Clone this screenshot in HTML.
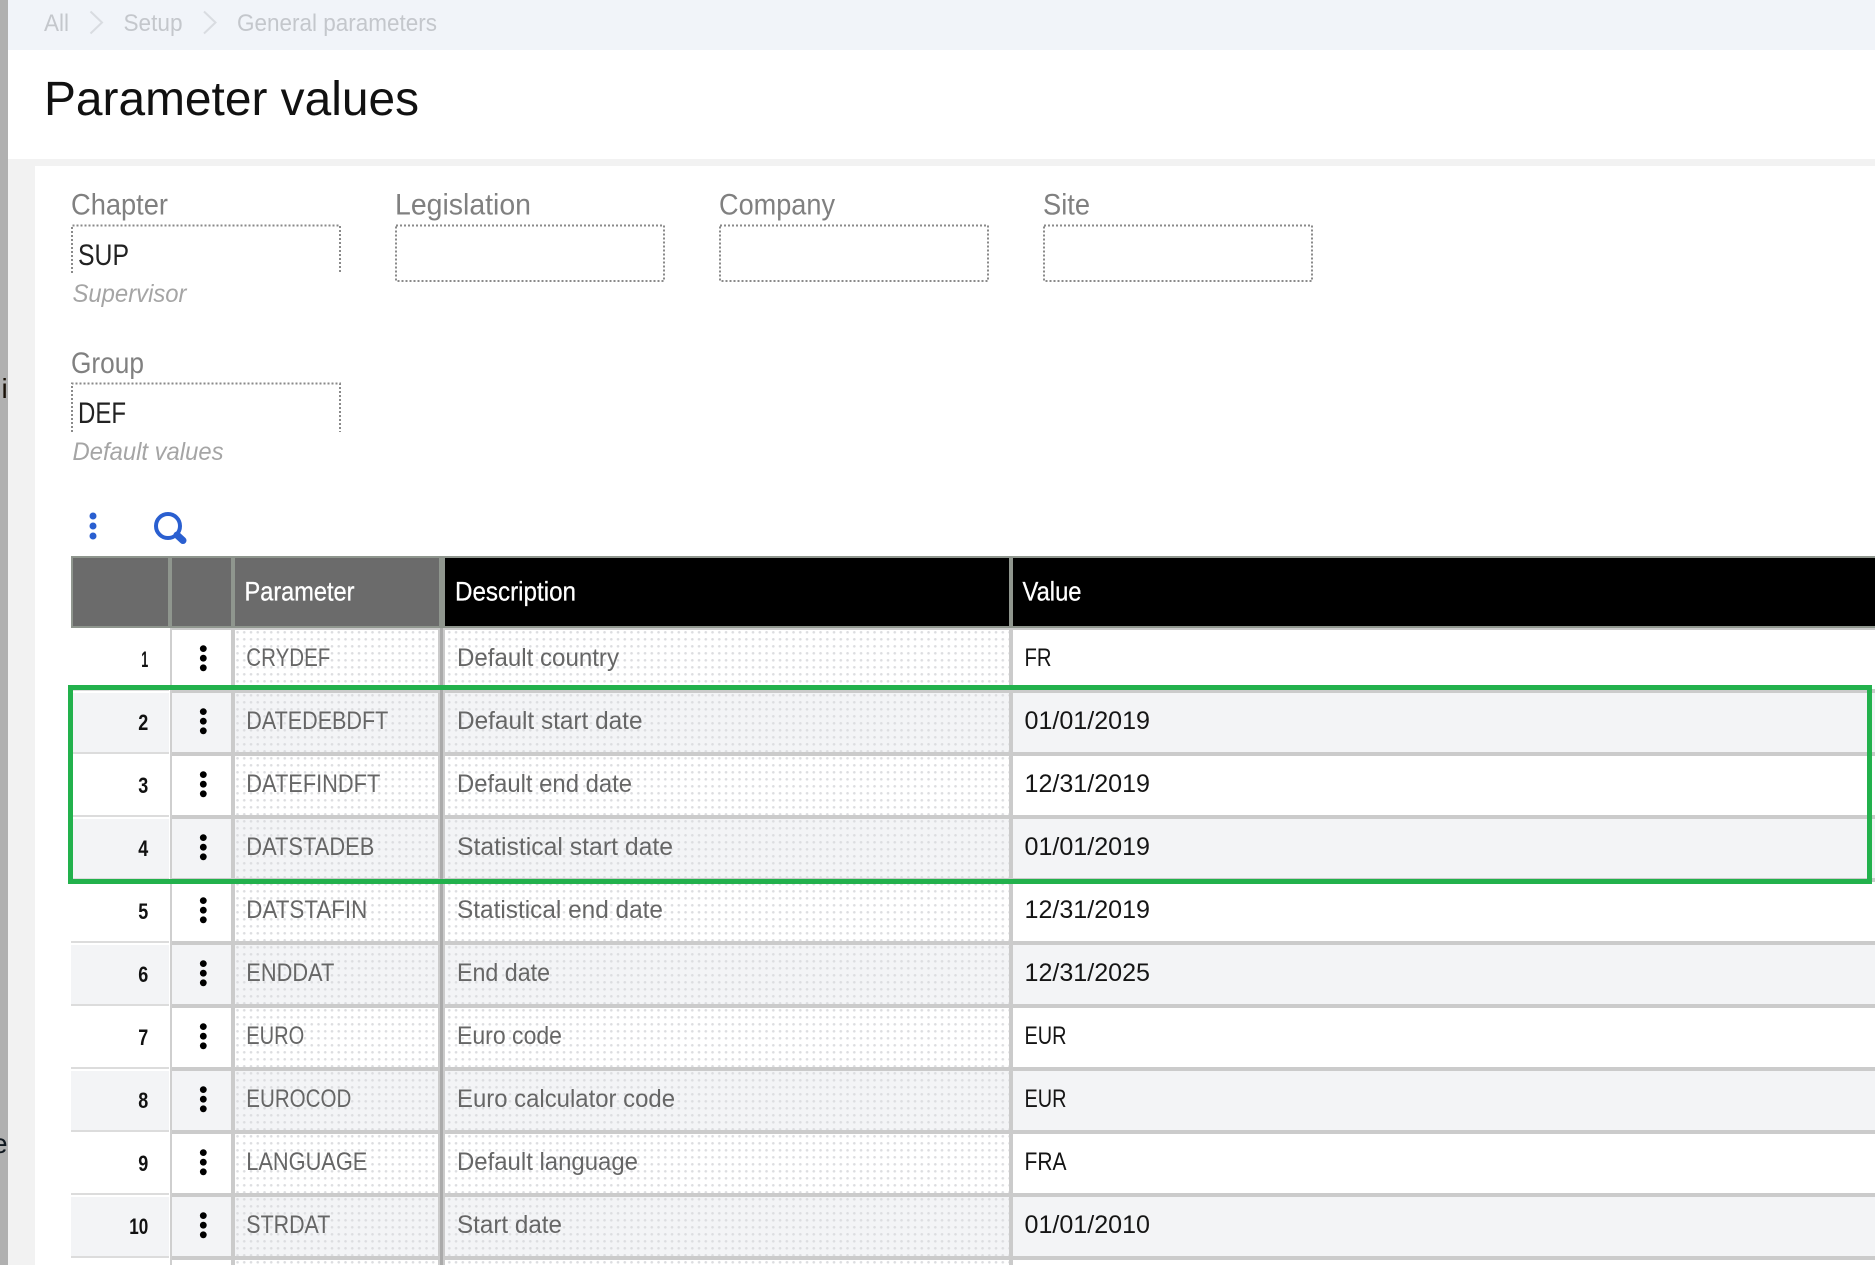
<!DOCTYPE html>
<html><head><meta charset="utf-8"><title>Parameter values</title>
<style>
html,body{margin:0;padding:0;background:#fff;width:1875px;height:1265px;overflow:hidden}
svg{display:block}
text{font-family:"Liberation Sans",sans-serif}
.bc{font-size:24px;fill:#c4c7cc}
.lb{font-size:30px;fill:#808080}
.iv{font-size:30px;fill:#222}
.it{font-size:25px;font-style:italic;fill:#a5a5a5}
.hd{font-size:27px;fill:#fff;stroke:#fff;stroke-width:.3px}
.n{font-size:22px;font-weight:bold;fill:#111;text-anchor:end}
.g{font-size:25px;fill:#666}
.v{font-size:25px;fill:#151515}
.box{fill:none;stroke:#8a8a8a;stroke-width:2;stroke-dasharray:2 2}
</style></head>
<body>
<svg xmlns="http://www.w3.org/2000/svg" width="1875" height="1265" viewBox="0 0 1875 1265">
<defs>
<pattern id="d1" x="235" y="630" width="6.75" height="7" patternUnits="userSpaceOnUse"><circle cx="2.5" cy="2.3" r="1.3" fill="#dcdde0"/></pattern>
<pattern id="d2" x="445" y="630" width="6.75" height="7" patternUnits="userSpaceOnUse"><circle cx="4.3" cy="2.3" r="1.3" fill="#dcdde0"/></pattern>
<clipPath id="bar"><rect x="0" y="0" width="8" height="1265"/></clipPath>
<g id="k"><circle cx="203.3" cy="18.6" r="3.4" fill="#000"/><circle cx="203.3" cy="28.2" r="3.4" fill="#000"/><circle cx="203.3" cy="37.8" r="3.4" fill="#000"/></g>
</defs>

<rect width="1875" height="1265" fill="#fff"/>
<rect x="8" y="159" width="1867" height="7" fill="#f2f2f2"/>
<rect x="8" y="159" width="27" height="1106" fill="#f2f2f2"/>
<rect x="0" y="0" width="8" height="1265" fill="#b0b0b0"/>
<g clip-path="url(#bar)"><text x="1.5" y="398" font-size="28" fill="#1a1208">i</text><text x="-8" y="1153" font-size="28" fill="#101820">e</text></g>

<rect x="8" y="0" width="1867" height="50" fill="#f1f4f9"/>
<text class="bc" x="44" y="31" textLength="25" lengthAdjust="spacingAndGlyphs">All</text>
<path d="M90.5 11.5L102 22.5L90.5 33.5" fill="none" stroke="#d9dce1" stroke-width="2"/>
<text class="bc" x="123.5" y="31" textLength="59" lengthAdjust="spacingAndGlyphs">Setup</text>
<path d="M204 11.5L215.5 22.5L204 33.5" fill="none" stroke="#d9dce1" stroke-width="2"/>
<text class="bc" x="237" y="31" textLength="200" lengthAdjust="spacingAndGlyphs">General parameters</text>

<text x="44" y="115" font-size="48" fill="#111" textLength="375" lengthAdjust="spacingAndGlyphs">Parameter values</text>

<text class="lb" x="71" y="214.5" textLength="97" lengthAdjust="spacingAndGlyphs">Chapter</text>
<text class="lb" x="395" y="214.5" textLength="136" lengthAdjust="spacingAndGlyphs">Legislation</text>
<text class="lb" x="719" y="214.5" textLength="116" lengthAdjust="spacingAndGlyphs">Company</text>
<text class="lb" x="1043" y="214.5" textLength="47" lengthAdjust="spacingAndGlyphs">Site</text>

<path class="box" d="M72 273V225.5H340V273"/>
<rect class="box" x="396" y="225.5" width="268" height="55.5"/>
<rect class="box" x="720" y="225.5" width="268" height="55.5"/>
<rect class="box" x="1044" y="225.5" width="268" height="55.5"/>
<text class="iv" x="78" y="265" textLength="51" lengthAdjust="spacingAndGlyphs">SUP</text>
<text class="it" x="72.5" y="302" textLength="114" lengthAdjust="spacingAndGlyphs">Supervisor</text>

<text class="lb" x="71" y="373" textLength="73" lengthAdjust="spacingAndGlyphs">Group</text>
<path class="box" d="M72 432V383.5H340V432"/>
<text class="iv" x="78" y="423" textLength="48" lengthAdjust="spacingAndGlyphs">DEF</text>
<text class="it" x="72.5" y="460" textLength="151" lengthAdjust="spacingAndGlyphs">Default values</text>

<circle cx="93" cy="516" r="3.5" fill="#2a5fd0"/><circle cx="93" cy="526" r="3.5" fill="#2a5fd0"/><circle cx="93" cy="536" r="3.5" fill="#2a5fd0"/>
<circle cx="168" cy="526" r="12" fill="none" stroke="#2a5fd0" stroke-width="4"/>
<path d="M177 535L183 540.5" stroke="#2a5fd0" stroke-width="7" stroke-linecap="round"/>

<!-- header -->
<rect x="71" y="556" width="1804" height="72" fill="#8f968e"/>
<rect x="73" y="558" width="95" height="68" fill="#6b6b6b"/>
<rect x="172" y="558" width="59" height="68" fill="#6b6b6b"/>
<rect x="235" y="558" width="204" height="68" fill="#6b6b6b"/>
<rect x="445" y="558" width="564" height="68" fill="#000"/>
<rect x="1013" y="558" width="862" height="68" fill="#000"/>
<text class="hd" x="244.5" y="600.5" textLength="110" lengthAdjust="spacingAndGlyphs">Parameter</text>
<text class="hd" x="455" y="600.5" textLength="121" lengthAdjust="spacingAndGlyphs">Description</text>
<text class="hd" x="1022.5" y="600.5" textLength="59" lengthAdjust="spacingAndGlyphs">Value</text>

<!-- even row backgrounds -->
<g fill="#f3f4f6">
<rect x="71" y="693" width="1804" height="59"/>
<rect x="71" y="819" width="1804" height="59"/>
<rect x="71" y="945" width="1804" height="59"/>
<rect x="71" y="1071" width="1804" height="59"/>
<rect x="71" y="1197" width="1804" height="59"/>
</g>
<rect x="235" y="630" width="203" height="635" fill="url(#d1)"/>
<rect x="445" y="630" width="564" height="635" fill="url(#d2)"/>

<!-- horizontal separators -->
<g fill="#cbcbcb">
<rect x="172" y="628" width="1703" height="2"/>
<rect x="172" y="689" width="1703" height="4"/>
<rect x="172" y="752" width="1703" height="4"/>
<rect x="172" y="815" width="1703" height="4"/>
<rect x="172" y="878" width="1703" height="4"/>
<rect x="172" y="941" width="1703" height="4"/>
<rect x="172" y="1004" width="1703" height="4"/>
<rect x="172" y="1067" width="1703" height="4"/>
<rect x="172" y="1130" width="1703" height="4"/>
<rect x="172" y="1193" width="1703" height="4"/>
<rect x="172" y="1256" width="1703" height="4"/>
</g>
<g fill="#dcdcdc">
<rect x="71" y="689" width="98" height="2"/>
<rect x="71" y="752" width="98" height="2"/>
<rect x="71" y="815" width="98" height="2"/>
<rect x="71" y="878" width="98" height="2"/>
<rect x="71" y="941" width="98" height="2"/>
<rect x="71" y="1004" width="98" height="2"/>
<rect x="71" y="1067" width="98" height="2"/>
<rect x="71" y="1130" width="98" height="2"/>
<rect x="71" y="1193" width="98" height="2"/>
<rect x="71" y="1256" width="98" height="2"/>
</g>
<!-- vertical separators -->
<rect x="169" y="628" width="1" height="637" fill="#fff"/>
<rect x="170" y="628" width="2" height="637" fill="#cfcfcf"/>
<rect x="231" y="628" width="4" height="637" fill="#cbcbcb"/>
<rect x="438" y="628" width="7" height="637" fill="#cbcbcb"/>
<rect x="440" y="628" width="3" height="637" fill="#aaaaaa"/>
<rect x="1009" y="628" width="4" height="637" fill="#cbcbcb"/>

<!-- rows -->
<g>
<text class="n" x="148.3" y="667" textLength="7" lengthAdjust="spacingAndGlyphs">1</text><use href="#k" y="630"/>
<text class="g" x="246.3" y="666" textLength="84" lengthAdjust="spacingAndGlyphs">CRYDEF</text>
<text class="g" x="457" y="666" textLength="162" lengthAdjust="spacingAndGlyphs">Default country</text>
<text class="v" x="1024.5" y="666" textLength="27" lengthAdjust="spacingAndGlyphs">FR</text>

<text class="n" x="148.3" y="730" textLength="10" lengthAdjust="spacingAndGlyphs">2</text><use href="#k" y="693"/>
<text class="g" x="246.3" y="729" textLength="142" lengthAdjust="spacingAndGlyphs">DATEDEBDFT</text>
<text class="g" x="457" y="729" textLength="185.5" lengthAdjust="spacingAndGlyphs">Default start date</text>
<text class="v" x="1024.5" y="729" textLength="125.5" lengthAdjust="spacingAndGlyphs">01/01/2019</text>

<text class="n" x="148.3" y="793" textLength="10" lengthAdjust="spacingAndGlyphs">3</text><use href="#k" y="756"/>
<text class="g" x="246.3" y="792" textLength="134" lengthAdjust="spacingAndGlyphs">DATEFINDFT</text>
<text class="g" x="457" y="792" textLength="175" lengthAdjust="spacingAndGlyphs">Default end date</text>
<text class="v" x="1024.5" y="792" textLength="125.5" lengthAdjust="spacingAndGlyphs">12/31/2019</text>

<text class="n" x="148.3" y="856" textLength="10" lengthAdjust="spacingAndGlyphs">4</text><use href="#k" y="819"/>
<text class="g" x="246.3" y="855" textLength="128" lengthAdjust="spacingAndGlyphs">DATSTADEB</text>
<text class="g" x="457" y="855" textLength="216" lengthAdjust="spacingAndGlyphs">Statistical start date</text>
<text class="v" x="1024.5" y="855" textLength="125.5" lengthAdjust="spacingAndGlyphs">01/01/2019</text>

<text class="n" x="148.3" y="919" textLength="10" lengthAdjust="spacingAndGlyphs">5</text><use href="#k" y="882"/>
<text class="g" x="246.3" y="918" textLength="121" lengthAdjust="spacingAndGlyphs">DATSTAFIN</text>
<text class="g" x="457" y="918" textLength="206" lengthAdjust="spacingAndGlyphs">Statistical end date</text>
<text class="v" x="1024.5" y="918" textLength="125.5" lengthAdjust="spacingAndGlyphs">12/31/2019</text>

<text class="n" x="148.3" y="982" textLength="10" lengthAdjust="spacingAndGlyphs">6</text><use href="#k" y="945"/>
<text class="g" x="246.3" y="981" textLength="88" lengthAdjust="spacingAndGlyphs">ENDDAT</text>
<text class="g" x="457" y="981" textLength="93" lengthAdjust="spacingAndGlyphs">End date</text>
<text class="v" x="1024.5" y="981" textLength="125.5" lengthAdjust="spacingAndGlyphs">12/31/2025</text>

<text class="n" x="148.3" y="1045" textLength="10" lengthAdjust="spacingAndGlyphs">7</text><use href="#k" y="1008"/>
<text class="g" x="246.3" y="1044" textLength="58" lengthAdjust="spacingAndGlyphs">EURO</text>
<text class="g" x="457" y="1044" textLength="105" lengthAdjust="spacingAndGlyphs">Euro code</text>
<text class="v" x="1024.5" y="1044" textLength="42" lengthAdjust="spacingAndGlyphs">EUR</text>

<text class="n" x="148.3" y="1108" textLength="10" lengthAdjust="spacingAndGlyphs">8</text><use href="#k" y="1071"/>
<text class="g" x="246.3" y="1107" textLength="105" lengthAdjust="spacingAndGlyphs">EUROCOD</text>
<text class="g" x="457" y="1107" textLength="218" lengthAdjust="spacingAndGlyphs">Euro calculator code</text>
<text class="v" x="1024.5" y="1107" textLength="42" lengthAdjust="spacingAndGlyphs">EUR</text>

<text class="n" x="148.3" y="1171" textLength="10" lengthAdjust="spacingAndGlyphs">9</text><use href="#k" y="1134"/>
<text class="g" x="246.3" y="1170" textLength="121" lengthAdjust="spacingAndGlyphs">LANGUAGE</text>
<text class="g" x="457" y="1170" textLength="181" lengthAdjust="spacingAndGlyphs">Default language</text>
<text class="v" x="1024.5" y="1170" textLength="42" lengthAdjust="spacingAndGlyphs">FRA</text>

<text class="n" x="148.3" y="1234" textLength="19" lengthAdjust="spacingAndGlyphs">10</text><use href="#k" y="1197"/>
<text class="g" x="246.3" y="1233" textLength="84" lengthAdjust="spacingAndGlyphs">STRDAT</text>
<text class="g" x="457" y="1233" textLength="105" lengthAdjust="spacingAndGlyphs">Start date</text>
<text class="v" x="1024.5" y="1233" textLength="125.5" lengthAdjust="spacingAndGlyphs">01/01/2010</text>
</g>

<!-- green highlight -->
<rect x="70.5" y="687.5" width="1799" height="194" fill="none" stroke="#22b14c" stroke-width="5"/>
</svg>
</body></html>
